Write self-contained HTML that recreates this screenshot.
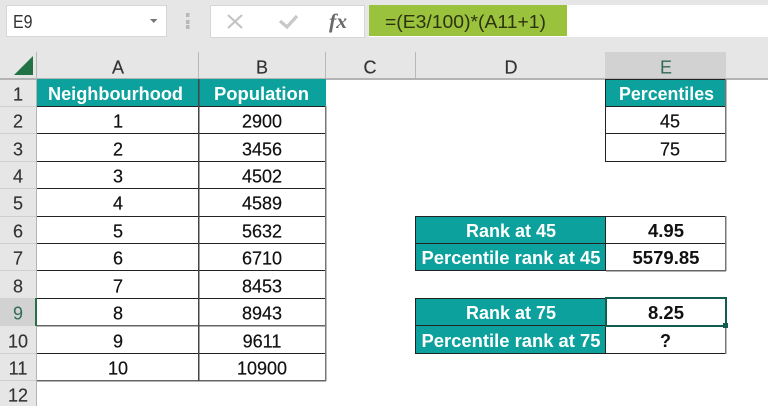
<!DOCTYPE html>
<html><head><meta charset="utf-8"><style>
html,body{margin:0;padding:0;background:#fff;width:768px;height:406px;overflow:hidden}
svg{display:block}
text{font-family:"Liberation Sans",sans-serif;font-size:18px;fill:#111}
.c{text-anchor:middle}
.n{stroke:#111;stroke-width:.2}
.b{font-weight:bold}
.w{fill:#fff;font-weight:bold}
.h{fill:#333;stroke:#333;stroke-width:.15}
</style></head><body>
<svg width="768" height="406" viewBox="0 0 768 406" xmlns="http://www.w3.org/2000/svg">
<rect width="768" height="79" fill="#e6e6e6"/>
<rect width="36" height="406" fill="#e6e6e6"/>
<!-- name box -->
<rect x="6.500" y="5.500" width="160" height="31" fill="#fff" stroke="#d6d6d6"/>
<text x="13" y="28" fill="#333" style="fill:#333" textLength="19.500" lengthAdjust="spacingAndGlyphs">E9</text>
<path d="M150 19h7.500l-3.750 4z" fill="#777"/>
<rect x="186" y="13" width="3.500" height="4" fill="#b8b8b8"/><rect x="186" y="20" width="3.500" height="4" fill="#b8b8b8"/><rect x="186" y="25" width="3.500" height="4" fill="#b8b8b8"/>
<!-- formula bar -->
<rect x="210.500" y="5.500" width="154" height="32" fill="#fff" stroke="#d6d6d6"/>
<rect x="369" y="5" width="399" height="32" fill="#fff"/>
<rect x="369" y="5" width="198" height="31" fill="#9bc23c"/>
<path d="M228 15l14 13M242 15l-14 13" stroke="#c4c4c4" stroke-width="2.200" fill="none"/>
<path d="M280 21l7 6 10-11" stroke="#c8c8c8" stroke-width="3.200" fill="none"/>
<text x="329" y="28" style="font-family:'Liberation Serif',serif;font-size:21px;font-style:italic;font-weight:bold;fill:#6a6a6a" textLength="18" lengthAdjust="spacingAndGlyphs">fx</text>
<text x="385" y="28" style="fill:#2c3310" textLength="161" lengthAdjust="spacingAndGlyphs">=(E3/100)*(A11+1)</text>
<!-- header lines -->
<rect x="0" y="78" width="768" height="2" fill="#b4b4b4"/>
<rect x="605" y="52" width="121" height="26" fill="#d2d2d2"/>
<rect x="36" y="52" width="1" height="27" fill="#b8b8b8"/>
<rect x="198" y="52" width="1" height="27" fill="#b8b8b8"/>
<rect x="325" y="52" width="1" height="27" fill="#b8b8b8"/>
<rect x="415" y="52" width="1" height="27" fill="#b8b8b8"/>
<path d="M14 75L33 56V75z" fill="#217346"/>
<text class="c h" x="118" y="73.500">A</text>
<text class="c h" x="262" y="73.500">B</text>
<text class="c h" x="370" y="73.500">C</text>
<text class="c h" x="511" y="73.500">D</text>
<text class="c" x="666" y="73.500" style="fill:#2f6b55">E</text>
<!-- row header -->
<rect x="36" y="79" width="1" height="327" fill="#b4b4b4"/>
<g fill="#cfcfcf">
<rect y="106" width="36" height="1"/><rect y="133" width="36" height="1"/><rect y="161" width="36" height="1"/><rect y="188" width="36" height="1"/><rect y="216" width="36" height="1"/><rect y="243" width="36" height="1"/><rect y="270" width="36" height="1"/><rect y="298" width="36" height="1"/><rect y="325" width="36" height="1"/><rect y="353" width="36" height="1"/><rect y="380" width="36" height="1"/>
</g>
<rect x="0" y="298" width="36" height="28" fill="#d2d2d2"/>
<rect x="35" y="298" width="2" height="28" fill="#217346"/>
<g transform="translate(0,.5)">
<text class="c h" x="18" y="100">1</text><text class="c h" x="18" y="127">2</text><text class="c h" x="18" y="155">3</text><text class="c h" x="18" y="182">4</text><text class="c h" x="18" y="209">5</text><text class="c h" x="18" y="237">6</text><text class="c h" x="18" y="264">7</text><text class="c h" x="18" y="292">8</text>
<text class="c" x="18" y="319" style="fill:#2f6b55">9</text>
<text class="c h" x="18" y="347">10</text><text class="c h" x="18" y="374">11</text><text class="c h" x="18" y="401">12</text>
</g>
<!-- teal fills -->
<rect x="37" y="79" width="289" height="27" fill="#0ca19c"/>
<rect x="606" y="79" width="120" height="27" fill="#0ca19c"/>
<rect x="416" y="216" width="190" height="55" fill="#0ca19c"/>
<rect x="416" y="298" width="190" height="55" fill="#0ca19c"/>
<!-- grid table 1 -->
<g stroke="#222" stroke-width="1" fill="none" shape-rendering="crispEdges">
<path d="M37 106.500H326M37 133.500H326M37 161.500H326M37 188.500H326M37 216.500H326M37 243.500H326M37 270.500H326M37 298.500H326M37 353.500H326"/>
<path d="M606 79.500H726M606 106.500H726M606 133.500H726M606 161.500H726M605.500 79V162"/>
<path d="M416 216.500H726M416 243.500H726M416 270.500H726M415.500 216V271M605.500 216V271"/>
<path d="M416 298.500H726M416 325.500H726M416 353.500H726M415.500 298V354M605.500 298V354"/>
</g>
<g fill="#666" shape-rendering="crispEdges">
<rect x="37" y="325" width="289" height="1.500"/>
<rect x="37" y="380" width="289" height="1.500"/>
<rect x="198" y="79" width="1.500" height="302" fill="#444"/>
<rect x="325" y="106" width="1.500" height="275" fill="#777"/>
<rect x="725" y="79" width="1.500" height="83" fill="#777"/>
<rect x="725" y="216" width="1.500" height="55" fill="#777"/>
<rect x="725" y="326" width="1.500" height="28" fill="#777"/>
<rect x="606" y="270" width="120" height="1.500" fill="#666"/>
</g>
<rect x="606" y="298" width="120" height="28" fill="none" stroke="#135c50" stroke-width="2"/>
<rect x="723" y="323" width="5" height="5" fill="#135c50"/>
<!-- headers -->
<text class="c w" x="115.500" y="100" textLength="135" lengthAdjust="spacingAndGlyphs">Neighbourhood</text>
<text class="c w" x="261.500" y="100" textLength="95" lengthAdjust="spacingAndGlyphs">Population</text>
<text class="c w" x="666.500" y="100" textLength="95" lengthAdjust="spacingAndGlyphs">Percentiles</text>
<g transform="translate(0,.5)">
<!-- col A -->
<text class="c n" x="118" y="127">1</text><text class="c n" x="118" y="155">2</text><text class="c n" x="118" y="182">3</text><text class="c n" x="118" y="209">4</text><text class="c n" x="118" y="237">5</text><text class="c n" x="118" y="264">6</text><text class="c n" x="118" y="292">7</text><text class="c n" x="118" y="319">8</text><text class="c n" x="118" y="347">9</text><text class="c n" x="118" y="374">10</text>
<!-- col B -->
<text class="c n" x="262" y="127">2900</text><text class="c n" x="262" y="155">3456</text><text class="c n" x="262" y="182">4502</text><text class="c n" x="262" y="209">4589</text><text class="c n" x="262" y="237">5632</text><text class="c n" x="262" y="264">6710</text><text class="c n" x="262" y="292">8453</text><text class="c n" x="262" y="319">8943</text><text class="c n" x="262" y="347">9611</text><text class="c n" x="262" y="374">10900</text>
<text class="c n" x="670" y="127">45</text><text class="c n" x="670" y="155">75</text>
</g>
<!-- tables -->
<text class="c w" x="511" y="237" textLength="90" lengthAdjust="spacingAndGlyphs">Rank at 45</text>
<text class="c w" x="511" y="264" textLength="179" lengthAdjust="spacingAndGlyphs">Percentile rank at 45</text>
<text class="c w" x="511" y="319" textLength="90" lengthAdjust="spacingAndGlyphs">Rank at 75</text>
<text class="c w" x="511" y="347" textLength="179" lengthAdjust="spacingAndGlyphs">Percentile rank at 75</text>
<text class="c b" x="666" y="237" textLength="36" lengthAdjust="spacingAndGlyphs">4.95</text>
<text class="c b" x="666" y="264" textLength="67" lengthAdjust="spacingAndGlyphs">5579.85</text>
<text class="c b" x="666" y="319" textLength="36" lengthAdjust="spacingAndGlyphs">8.25</text>
<text class="c b" x="665.500" y="347">?</text>
</svg>
</body></html>
